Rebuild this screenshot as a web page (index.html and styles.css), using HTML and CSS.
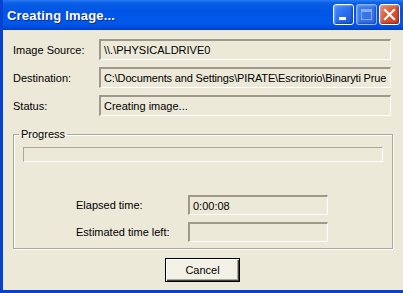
FILE: index.html
```html
<!DOCTYPE html>
<html>
<head>
  <title>Creating Image...</title>
  <link rel="stylesheet" href="styles.css">
</head>
<body>
  <div class="window">
    <div class="title-bar">
      <span class="title-text">Creating Image...</span>
      <div class="title-buttons">
        <div class="tb-btn tb-min"><span class="min-bar"></span></div>
        <div class="tb-btn tb-max disabled"><span class="max-box"></span></div>
        <div class="tb-btn tb-close">
          <svg width="13" height="13" viewBox="0 0 13 13">
            <path d="M2 2 L11 11 M11 2 L2 11" stroke="#fff" stroke-width="2.2" stroke-linecap="square"/>
          </svg>
        </div>
      </div>
    </div>

    <div class="content">
      <div class="info-grid">
        <label>Image Source:</label>
        <div class="field">\\.\PHYSICALDRIVE0</div>
        <label>Destination:</label>
        <div class="field tight">C:\Documents and Settings\PIRATE\Escritorio\Binaryti Prue</div>
        <label>Status:</label>
        <div class="field">Creating image...</div>
      </div>

      <fieldset class="group">
        <legend>Progress</legend>
        <div class="progress"></div>
        <div class="time-grid">
          <label>Elapsed time:</label>
          <div class="field small">0:00:08</div>
          <label>Estimated time left:</label>
          <div class="field small"></div>
        </div>
      </fieldset>

      <div class="actions">
        <button class="btn">Cancel</button>
      </div>
    </div>
  </div>
</body>
</html>
```

FILE: styles.css
```css
body {
  margin: 0;
  padding: 0;
  font-family: "Liberation Sans", Arial, sans-serif;
  font-size: 11px;
  color: #000;
  background-color: #ece9d8;
}
.window {
  width: 403px;
  height: 293px;
  display: flex;
  flex-direction: column;
  box-sizing: border-box;
  border-left: 3px solid #0841d0;
  border-bottom: 3px solid #0841d0;
  background-color: #ece9d8;
  overflow: hidden;
}
.title-bar {
  height: 30px;
  flex: none;
  margin-left: -3px;
  display: flex;
  align-items: center;
  justify-content: space-between;
  padding: 0 3px 0 7px;
  background: linear-gradient(#2a7cf6 0, #0a5fe4 10%, #0055e5 35%, #0058ea 80%, #0048d6 94%, #003cc4 100%);
}
.title-text {
  color: #fff;
  font-weight: bold;
  font-size: 13px;
  letter-spacing: 0.2px;
  text-shadow: 1px 1px #0a2a8a;
}
.title-buttons {
  display: flex;
  gap: 2px;
  margin-top: -1px;
}
.tb-btn {
  width: 19px;
  height: 19px;
  border: 1px solid #fff;
  border-radius: 3px;
  display: flex;
  align-items: center;
  justify-content: center;
  background: linear-gradient(135deg, #4a8cf8 0%, #2a6ef0 50%, #1a56d8 100%);
  box-shadow: inset -1px -1px 2px rgba(0, 30, 120, 0.5), inset 1px 1px 2px rgba(160, 200, 255, 0.6);
}
.tb-min {
  align-items: flex-end;
  justify-content: flex-start;
}
.min-bar {
  width: 7px;
  height: 3px;
  background: #fff;
  margin: 0 0 4px 5px;
}
.tb-max.disabled {
  border-color: rgba(255, 255, 255, 0.45);
  background: linear-gradient(135deg, #3f7fef 0%, #2f6ae6 100%);
}
.max-box {
  width: 9px;
  height: 7px;
  border: 1px solid rgba(255, 255, 255, 0.4);
  border-top-width: 3px;
}
.tb-close {
  background: linear-gradient(135deg, #f08a6a 0%, #e4582f 45%, #c8401c 100%);
}
.content {
  flex: 1;
  padding: 9px 11px 0 10px;
  display: flex;
  flex-direction: column;
}
.info-grid {
  display: grid;
  grid-template-columns: 86px 292px;
  grid-auto-rows: 21px;
  row-gap: 7px;
  align-items: center;
}
.field {
  height: 21px;
  box-sizing: border-box;
  border-top: 2px solid #9d9a8c;
  border-left: 2px solid #9d9a8c;
  border-right: 1px solid #fff;
  border-bottom: 1px solid #fff;
  padding: 2px 0 0 3px;
  white-space: nowrap;
  overflow: hidden;
  line-height: 14px;
}
.field.tight {
  letter-spacing: -0.15px;
}
.group {
  margin: 12px 0 0 0;
  padding: 6px 8px 0 9px;
  height: 121px;
  box-sizing: border-box;
  width: 380px;
  border: 1px solid #aca899;
  box-shadow: inset 1px 1px #fff, 1px 1px #fff;
}
.group legend {
  padding: 0 2px;
  margin-left: -4px;
  line-height: 13px;
}
.progress {
  height: 15px;
  width: 360px;
  box-sizing: border-box;
  border-top: 1px solid #aca899;
  border-left: 1px solid #aca899;
  border-right: 1px solid #fff;
  border-bottom: 1px solid #fff;
}
.time-grid {
  display: grid;
  grid-template-columns: 112px 140px;
  grid-auto-rows: 20px;
  row-gap: 7px;
  align-items: center;
  margin: 33px 0 0 53px;
}
.field.small {
  height: 20px;
}
.actions {
  display: flex;
  justify-content: center;
  margin-top: 9px;
}
.btn {
  width: 75px;
  height: 24px;
  font-family: "Liberation Sans", Arial, sans-serif;
  font-size: 11px;
  background-color: #f3f1e6;
  border: 1px solid #000;
  box-shadow: inset 1px 1px #fff, inset -1px -1px #404040, inset -2px -2px #aca899;
  padding: 0;
}
```
